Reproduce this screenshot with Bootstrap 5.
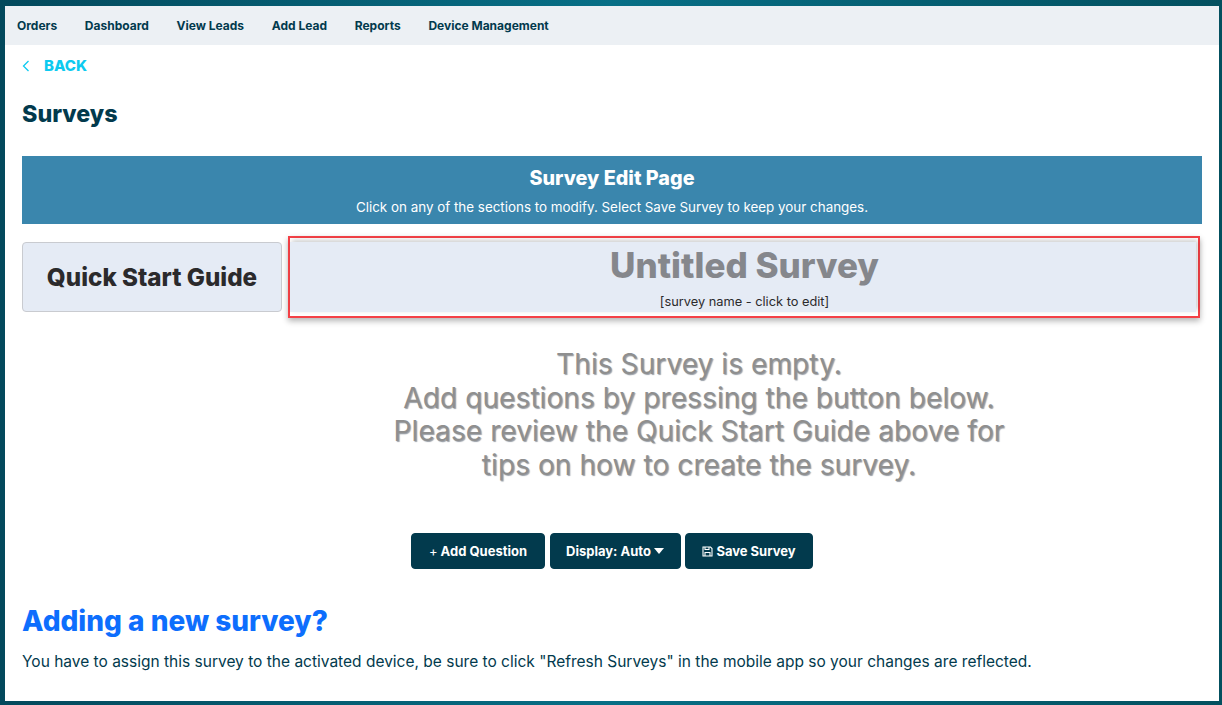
<!DOCTYPE html>
<html lang="en">
  <head>
    <meta charset="UTF-8" />
    <meta name="viewport" content="width=device-width, initial-scale=1.0" />
    <title>Surveys</title>
    <link href="https://cdn.jsdelivr.net/npm/bootstrap@5.3.0/dist/css/bootstrap.min.css" rel="stylesheet" />
    <style>
      html, body { height: 100%; overflow: hidden; }
      body {
        font-family: "Inter", "Open Sans", sans-serif;
        background: linear-gradient(90deg, #03495c 0%, #076f86 50%, #03505f 100%);
        padding: 6px 3px 4px 5px;
      }
      .page-frame { background: #fff; height: 100%; color: #023a4d; }
      .top-nav { background: #ecf0f4; height: 39px; padding-left: 12px; gap: 27.7px; }
      .top-nav a { color: #023a4d; font-size: 12px; font-weight: 700; text-decoration: none; padding: 0; }
      .page-body { padding: 0 17px; }
      .back-link { color: #0dcaf0; font-size: 15px; font-weight: 800; text-decoration: none; height: 42px; gap: 14px; }
      .page-title { font-size: 23.3px; font-weight: 800; margin: 0; line-height: 29px; padding-top: 12px; height: 69px; }
      .edit-banner { background: #3a86ad; color: #fff; height: 68px; padding-top: 9px; }
      .edit-banner h2 { font-size: 19.8px; font-weight: 800; margin: 0; line-height: 26px; }
      .edit-banner p { font-size: 13.4px; margin: 8px 0 0; line-height: 17px; }
      .head-row { gap: 6px; margin-top: 12px; padding-right: 2px; }
      .guide-btn {
        width: 260px; height: 70px; margin-top: 6px; background: #e5ebf5; border: 1px solid #c9cbd0;
        border-radius: 4px; color: #2b2a2c; font-size: 24.2px; font-weight: 800; padding: 2px 0 0; white-space: nowrap;
      }
      .name-outline { flex: 1; border: 2px solid #f44046; padding: 4px 2px 4px 0; box-shadow: 0 3px 6px rgba(0,0,0,.3); }
      .name-fill { background: #e5ebf5; height: 70px; box-shadow: 2px -2px 5px rgba(0,0,0,.2); padding: 1px 0 0 3px; }
      .name-fill h3 { font-size: 35px; font-weight: 800; color: #85878c; margin: 0; line-height: 44px; }
      .name-fill p { font-size: 12.8px; color: #2b2a2c; margin: 7px 0 0; line-height: 16px; }
      .empty-note {
        padding-left: 174px; margin-top: 30px; color: #8f8f8f; font-size: 28.2px; line-height: 33.6px;
        text-shadow: 1px 1px 1px #9aa0a8;
      }
      .action-row { gap: 4.5px; margin-top: 51px; }
      .action-btn {
        background: #023a4d; border-color: #023a4d; color: #fff; height: 36px; font-size: 13px; font-weight: 700;
        padding: 0; border-radius: 4px; display: flex; align-items: center; justify-content: center; gap: 3px;
      }
      .action-btn:hover { background: #023a4d; color: #fff; }
      .action-add { width: 134px; }
      .action-display { width: 131px; }
      .action-save { width: 128px; }
      .note-title { font-size: 28px; font-weight: 800; color: #0d6efd; margin: 32px 0 0; line-height: 40px; }
      .note-text { font-size: 15.5px; margin: 11px 0 0; line-height: 20px; }
    </style>
  </head>
  <body>
    <div class="page-frame">
      <nav class="top-nav d-flex align-items-center">
        <a href="#">Orders</a>
        <a href="#">Dashboard</a>
        <a href="#">View Leads</a>
        <a href="#">Add Lead</a>
        <a href="#">Reports</a>
        <a href="#">Device Management</a>
      </nav>
      <div class="page-body">
        <a href="#" class="back-link d-flex align-items-center">
          <svg width="8" height="12" viewBox="0 0 8 12" fill="none" stroke="#0dcaf0" stroke-width="1.3"><path d="M6.5 1 1.5 6l5 5" /></svg>
          <span>BACK</span>
        </a>
        <h1 class="page-title">Surveys</h1>
        <div class="edit-banner text-center">
          <h2>Survey Edit Page</h2>
          <p>Click on any of the sections to modify. Select Save Survey to keep your changes.</p>
        </div>
        <div class="head-row d-flex align-items-start">
          <button class="btn guide-btn">Quick Start Guide</button>
          <div class="name-outline">
            <div class="name-fill text-center">
              <h3>Untitled Survey</h3>
              <p>[survey name - click to edit]</p>
            </div>
          </div>
        </div>
        <div class="empty-note text-center">
          This Survey is empty.<br />
          Add questions by pressing the button below.<br />
          Please review the Quick Start Guide above for<br />
          tips on how to create the survey.
        </div>
        <div class="action-row d-flex justify-content-center">
          <button class="btn action-btn action-add"><span class="fw-normal">+</span> Add Question</button>
          <button class="btn action-btn action-display">Display: Auto
            <svg width="10" height="6" viewBox="0 0 10 6" fill="#fff"><path d="M0 0h10L5 6z" /></svg>
          </button>
          <button class="btn action-btn action-save">
            <svg width="11" height="11" viewBox="0 0 11 11" fill="none" stroke="#fff" stroke-width="1.1"><path d="M1 1h7.5L10 2.5V10H1z" /><path d="M3 1v2.5h4V1M3 10V6.5h5V10" /></svg>
            Save Survey
          </button>
        </div>
        <h2 class="note-title">Adding a new survey?</h2>
        <p class="note-text">You have to assign this survey to the activated device, be sure to click "Refresh Surveys" in the mobile app so your changes are reflected.</p>
      </div>
    </div>
    <script src="https://cdn.jsdelivr.net/npm/bootstrap@5.3.0/dist/js/bootstrap.bundle.min.js"></script>
  </body>
</html>
